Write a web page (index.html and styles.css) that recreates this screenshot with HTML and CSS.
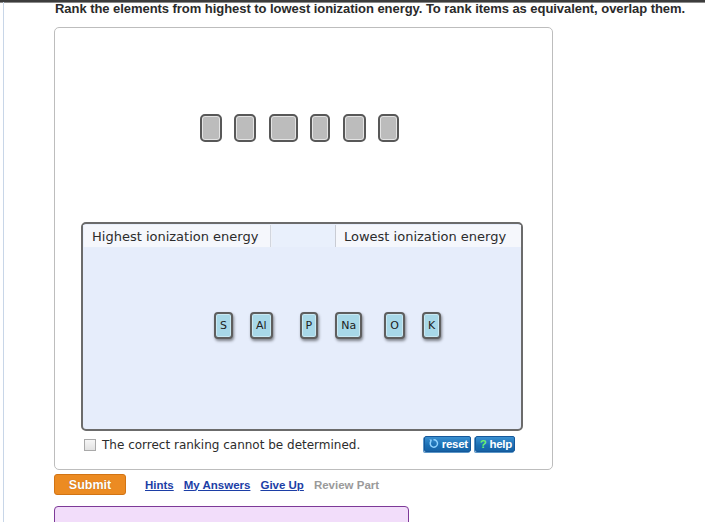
FILE: index.html
```html
<!DOCTYPE html>
<html>
<head>
<meta charset="utf-8">
<link rel="stylesheet" href="styles.css">
</head>
<body>
<div class="frame">
  <p class="prompt">Rank the elements from highest to lowest ionization energy. To rank items as equivalent, overlap them.</p>
  <div class="card">
    <div class="slots">
      <span class="slot w22"></span>
      <span class="slot w22"></span>
      <span class="slot w29"></span>
      <span class="slot w20"></span>
      <span class="slot w23"></span>
      <span class="slot w21"></span>
    </div>
    <div class="rankbox">
      <div class="rankhead">
        <span class="label label-high">Highest ionization energy</span>
        <span class="label label-low">Lowest ionization energy</span>
      </div>
      <div class="tiles">
        <span class="tile">S</span>
        <span class="tile">Al</span>
        <span class="tile far">P</span>
        <span class="tile">Na</span>
        <span class="tile mid">O</span>
        <span class="tile">K</span>
      </div>
    </div>
    <div class="options">
      <label class="check"><span class="box"></span>The correct ranking cannot be determined.</label>
      <div class="tools">
        <span class="tool"><svg class="ico" viewBox="0 0 12 12" width="11" height="11"><path d="M3.2 3.6 A4 4 0 1 0 6 2" fill="none" stroke="#8fd3ff" stroke-width="1.6"/><path d="M1.6 1.4 L4.4 1.8 L3.2 4.6 Z" fill="#8fd3ff"/></svg>reset</span>
        <span class="tool"><span class="q">?</span>help</span>
      </div>
    </div>
  </div>
  <div class="actions">
    <span class="submit">Submit</span>
    <a class="link" href="#">Hints</a>
    <a class="link" href="#">My Answers</a>
    <a class="link" href="#">Give Up</a>
    <span class="link disabled">Review Part</span>
  </div>
  <div class="feedback"></div>
</div>
</body>
</html>
```

FILE: styles.css
```css
html, body {
  margin: 0;
  padding: 0;
  background: #ffffff;
}
body {
  border-top: 2px solid #3c3c3c;
  box-shadow: inset 0 1px 0 #8a8a8a;
  height: 520px;
  overflow: hidden;
  font-family: "Liberation Sans", Arial, sans-serif;
}
.frame {
  margin-left: 3px;
  border-left: 1px solid #c8d6e8;
  padding-left: 50px;
  padding-top: 1px;
  height: 520px;
  box-sizing: border-box;
}
.prompt {
  margin: -1px 0 11px 1px;
  font-weight: bold;
  font-size: 13px;
  line-height: 14px;
  color: #2a2a2a;
  white-space: nowrap;
  letter-spacing: -0.05px;
}
.card {
  width: 497px;
  height: 441px;
  border: 1px solid #bdbdbd;
  border-radius: 5px;
  display: flex;
  flex-direction: column;
}
.slots {
  display: flex;
  gap: 12.4px;
  margin-top: 86px;
  padding-left: 145px;
  height: 28px;
}
.slot {
  display: block;
  height: 28px;
  box-sizing: border-box;
  border: 2px solid #585858;
  border-radius: 5px;
  background: #bcbcbc;
  box-shadow: inset 0 0 0 1px #e4e4e4;
}
.w20 { width: 20px; }
.w21 { width: 21px; }
.w22 { width: 22px; }
.w23 { width: 23px; }
.w29 { width: 29px; }
.rankbox {
  margin-top: 80px;
  margin-left: 26px;
  width: 442px;
  height: 209px;
  box-sizing: border-box;
  border: 2px solid #6b6b6b;
  border-radius: 5px;
  background: #e6edfb;
  display: flex;
  flex-direction: column;
}
.rankhead {
  display: flex;
  justify-content: space-between;
  height: 22px;
  margin-top: 1px;
  padding-left: 1px;
  background: #e9f0fc;
}
.label {
  display: flex;
  align-items: center;
  font-family: "DejaVu Sans", Verdana, sans-serif;
  font-size: 13px;
  color: #2c2c2c;
  background: #f5f7fc;
  padding-left: 8px;
  box-sizing: border-box;
}
.label-high {
  width: 187px;
  border-right: 1px solid #d2d6de;
  box-shadow: 1px 0 1px #eef1f8;
}
.label-low {
  width: 186px;
  border-left: 1px solid #c9ccd4;
}
.tiles {
  display: flex;
  margin-top: 65px;
  padding-left: 131px;
  gap: 17px;
}
.tile {
  display: flex;
  align-items: center;
  justify-content: center;
  height: 27px;
  box-sizing: border-box;
  padding: 0 4px;
  border: 2px solid #5e5e5e;
  border-radius: 4px;
  background: #a8d8e8;
  box-shadow: 1px 2px 3px rgba(0,0,0,0.45), inset 0 0 0 1px #c8e8f2;
  font-family: "DejaVu Sans", Verdana, sans-serif;
  font-size: 11px;
  color: #222;
}
.tile.far { margin-left: 10px; }
.tile.mid { margin-left: 5px; }
.options {
  display: flex;
  align-items: center;
  margin-top: 5px;
  margin-left: 29px;
  width: 431px;
  height: 17px;
}
.check {
  display: flex;
  align-items: center;
  font-family: "DejaVu Sans", Verdana, sans-serif;
  font-size: 12px;
  color: #2c2c2c;
}
.box {
  display: inline-block;
  width: 12px;
  height: 12px;
  box-sizing: border-box;
  border: 1px solid #a9a9a9;
  background: linear-gradient(#f6f6f6, #e2e2e2);
  margin-right: 6px;
  margin-top: 1px;
}
.tools {
  margin-left: auto;
  display: flex;
  gap: 4px;
  margin-top: -2px;
}
.tool {
  display: flex;
  align-items: center;
  height: 16px;
  box-sizing: border-box;
  padding: 0 2px 0 2px;
  border-radius: 2px;
  background: linear-gradient(#3a8fd0, #1a6fb4 60%, #1663a6);
  border: 1px solid #15589a;
  box-shadow: -1px 1px 0 #5c97c8;
  color: #ffffff;
  font-weight: bold;
  font-size: 11.5px;
  letter-spacing: -0.3px;
}
.ico { margin-right: 3px; margin-left: 1px; }
.q {
  color: #6cf06c;
  margin-right: 3px;
  margin-left: 2px;
}
.actions {
  display: flex;
  align-items: center;
  margin-top: 4px;
  height: 21px;
}
.submit {
  display: flex;
  align-items: center;
  justify-content: center;
  width: 72px;
  height: 21px;
  box-sizing: border-box;
  background: #ec8b22;
  border: 1px solid #d27414;
  border-radius: 3px;
  color: #ffffff;
  font-weight: bold;
  font-size: 12.5px;
  text-shadow: 0 0 1px rgba(120,60,0,0.5);
  margin-right: 19px;
}
.link {
  font-weight: bold;
  font-size: 11.5px;
  color: #1c3ea6;
  text-decoration: underline;
  margin-right: 10px;
}
.link.disabled {
  color: #9a9a9a;
  text-decoration: none;
}
.feedback {
  margin-top: 11px;
  width: 355px;
  height: 30px;
  box-sizing: border-box;
  background: #f2ddfa;
  border: 1px solid #7d3a98;
  border-radius: 4px;
}
```
